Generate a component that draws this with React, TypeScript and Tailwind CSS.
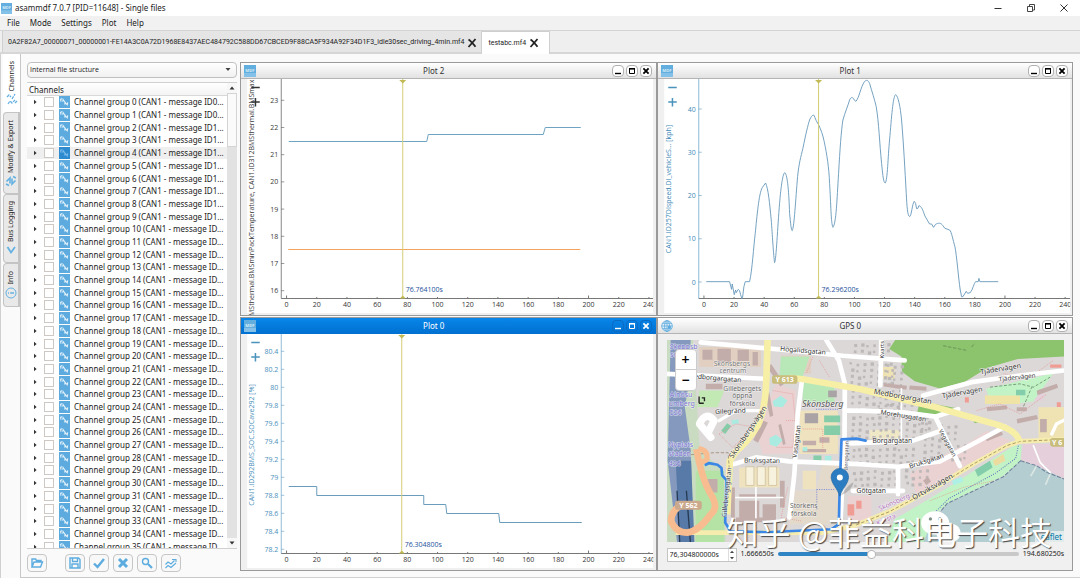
import React from "react";

type WindowProps = {
  title: string;
  active?: boolean;
  icon?: "mdf" | "globe";
  children: React.ReactNode;
};

const MdfIcon = ({ className }: { className: string }) => (
  <svg viewBox="0 0 12 12" className={className} aria-hidden="true">
    <rect width="12" height="12" fill="#62aede" />
    <rect y="8" width="12" height="4" fill="#84c1e8" />
    <text x="6" y="6.6" textAnchor="middle" fontSize="4.2" fontWeight="700" fontFamily="Open Sans" fill="#d5eaf7">
      MDF
    </text>
  </svg>
);

const GlobeIcon = ({ className }: { className: string }) => (
  <svg viewBox="0 0 12 12" className={className} fill="none" stroke="#5aa8dc" strokeWidth="0.8" aria-hidden="true">
    <circle cx="6" cy="6" r="5.3" fill="#e4f1fa" />
    <ellipse cx="6" cy="6" rx="2.4" ry="5.3" />
    <path d="M0.7 6h10.6M1.5 3.3h9M1.5 8.7h9M6 .7v10.6" />
    <circle cx="8.4" cy="7.2" r="1.2" fill="#5aa8dc" />
  </svg>
);

const CanIcon = ({ selected }: { selected: boolean }) => (
  <svg viewBox="0 0 11 12" className="h-3 w-[11px] shrink-0" aria-hidden="true">
    <rect width="11" height="12" fill={selected ? "#2f8bd0" : "#5dabde"} />
    <path
      d="M3.4 2.6 1.6 3.4 2 5.6M3.600 5.6l.6-1.800 1.600 2.200M5.800 8.6l.2-2.400 2.200 2.600.6-2.400"
      fill="none"
      stroke={selected ? "#7dbcea" : "#e3f1fa"}
      strokeWidth="1.1"
    />
  </svg>
);

function WindowButtons({ active }: { active: boolean }) {
  const box = active
    ? "flex size-3 items-center justify-center rounded-sm border border-[#0a6bc4] text-white"
    : "flex size-3 items-center justify-center rounded-sm border border-[#b0b0b0] bg-white text-black";
  return (
    <div className="flex gap-0.5">
      <button className={box} aria-label="Minimize">
        <svg viewBox="0 0 10 10" className="size-2.5 shrink-0">
          <path d="M2 7.5h6" stroke="currentColor" strokeWidth="1.4" />
        </svg>
      </button>
      <button className={box} aria-label="Maximize">
        <svg viewBox="0 0 10 10" className="size-2.5 shrink-0" fill="none" stroke="currentColor">
          <path d="M2.5 2.5v5h5v-5" />
          <path d="M2 2.8h6" strokeWidth="1.6" />
        </svg>
      </button>
      <button className={box} aria-label="Close">
        <svg viewBox="0 0 10 10" className="size-2.5 shrink-0">
          <path d="m2.4 2.4 5.2 5.2m0-5.2L2.4 7.6" stroke="currentColor" strokeWidth="1.8" />
        </svg>
      </button>
    </div>
  );
}

function SubWindow({ title, active = false, icon = "mdf", children }: WindowProps) {
  return (
    <section className="flex min-h-0 min-w-0 flex-col border border-[#9a9a9a] bg-[#f0f0f0]">
      <header
        className={
          active
            ? "flex h-4 shrink-0 items-center bg-gradient-to-b from-[#0a86ea] to-[#0070d0] pr-1 pl-[3px] text-white"
            : "flex h-4 shrink-0 items-center border-b border-[#b4b4b4] bg-gradient-to-b from-white to-[#e2e2e2] pr-1 pl-[3px] text-[#333]"
        }
      >
        {icon === "mdf" ? <MdfIcon className="size-3" /> : <GlobeIcon className="size-3" />}
        <h2 className="flex-1 text-center text-[8px] leading-4">{title}</h2>
        <WindowButtons active={active} />
      </header>
      <div className="flex min-h-0 flex-1 flex-col">{children}</div>
    </section>
  );
}

type Tick = { y: number; label: string };
type ChartProps = {
  label: string;
  labelY: number;
  color: string;
  axisX: number;
  x0: number;
  step: number;
  ticks: Tick[];
  cursorX: number;
  cursor: string;
  signColor: string;
  children: React.ReactNode;
};

function Chart({ label, labelY, color, axisX, x0, step, ticks, cursorX, cursor, signColor, children }: ChartProps) {
  const xs = Array.from({ length: 13 }, (_, i) => i * 20);
  return (
    <svg viewBox="0 0 414 236" className="min-h-0 w-full flex-1 overflow-hidden" fontFamily="'Open Sans', sans-serif" fontSize="7">
      <rect x="6" width="406" height="234" fill="#fff" />
      <text transform={`translate(13 ${labelY}) rotate(-90)`} textAnchor="middle" fill={color}>
        {label}
      </text>
      <path d="M10 8.500h8.500M10 23h8.500M14.200 19v8.500" stroke={signColor} strokeWidth="1.500" />
      <path d={`M${axisX} 0V219.500`} stroke={color} strokeOpacity="0.6" />
      <path d={`M${axisX} 219.500H412`} stroke="#777" />
      {ticks.map((t) => (
        <g key={t.label}>
          <path d={`M${axisX} ${t.y}h3`} stroke={color} strokeOpacity="0.5" />
          <text x={axisX - 3} y={t.y + 2.5} textAnchor="end" fill={color}>
            {t.label}
          </text>
        </g>
      ))}
      {xs.map((x, i) => (
        <g key={x}>
          <path d={`M${x0 + i * step} 219.500v${x % 200 === 0 ? -3 : -1.5}`} stroke="#777" />
          <text x={x0 + i * step} y="228" textAnchor="middle" fill="#333">
            {x}
          </text>
        </g>
      ))}
      <rect x="412" width="2" height="236" fill="#f0f0f0" />
      {children}
      <path d={`M${cursorX} 0V219`} stroke="#d3cc74" />
      <path d={`M${cursorX - 3.5} 1h7l-3.500 3.500zM${cursorX - 3} 219.500h6l-3-3z`} fill="#c2bb55" />
      <text x={cursorX + 3} y="213" fill="#24509a">
        {cursor}
      </text>
    </svg>
  );
}

const speedPath =
  "M150 665H220L226 688 228 672 234 704 238 690 240 698 246 688 250 692 253 704 257 716 259 712 263 680 267 665H280C288 630 292 560 297 520C302 470 308 400 318 383L328 369C336 385 340 430 345 480C348 520 352 590 355 608C360 600 364 500 370 430C374 380 380 338 386 338C394 345 398 400 400 460C403 490 405 512 408 512C414 500 418 420 424 350C428 310 434 290 440 265C448 225 455 195 460 180C464 170 468 166 472 165C475 168 477 176 480 182L488 196C494 210 500 225 504 245C512 285 518 320 520 370C524 430 524 490 530 502C540 490 542 420 547 340C551 270 555 210 560 180C566 158 576 135 580 120C586 108 590 112 594 120L599 124C608 115 614 80 624 66C630 58 636 60 640 70C648 98 654 115 660 140C668 190 670 250 676 310C680 350 682 368 687 369C694 360 695 290 700 240C706 170 710 110 718 104C726 108 732 140 736 180C742 250 746 330 750 400C752 440 754 468 760 470C766 468 768 430 774 424L778 430 781 446 785 445 788 437C795 438 800 450 806 468L820 492 826 492 832 502 838 493C846 488 854 488 860 497L866 505 880 510C886 515 890 540 896 560C902 590 906 650 912 690L916 710H920L930 694 934 700 942 698C950 688 953 670 958 665H966L968 655 971 665H1026";

const houseBlocks = [
  [580, 145, 130, 60], [690, 150, 55, 70], [585, 225, 150, 60], [585, 305, 230, 60], [660, 270, 120, 20],
  [585, 400, 190, 45], [590, 468, 125, 55], [745, 465, 70, 55], [850, 330, 60, 45], [800, 370, 60, 60],
  [590, 88, 120, 30], [790, 300, 40, 60], [880, 390, 50, 40],
];

const houses = houseBlocks.flatMap(([x, y, w, h], b) => {
  const out: { x: number; y: number; s: number }[] = [];
  for (let i = 0; i * 20 < w; i++)
    for (let j = 0; j * 19 < h; j++)
      out.push({ x: x + i * 20 + ((i * 7 + j * 5 + b) % 6), y: y + j * 19 + ((i * 5 + b) % 7), s: 7 + ((i + j * 3 + b) % 4) });
  return out;
});

type MapLabel = { x: number; y: number; t: string; r?: number; s?: number; c?: string; i?: boolean };
const mapLabels: MapLabel[] = [
  { x: 440, y: 117, t: "Högalidsgatan", r: 5 },
  { x: 228, y: 158, t: "Skönsbergs", c: "#777" },
  { x: 231, y: 178, t: "centrum", c: "#777" },
  { x: 176, y: 199, t: "Medborgargatan", r: 5 },
  { x: 259, y: 232, t: "Gillebergets", c: "#666" },
  { x: 259, y: 253, t: "öppna", c: "#666" },
  { x: 259, y: 275, t: "förskola", c: "#666" },
  { x: 224, y: 298, t: "Gilegränd", r: -3 },
  { x: 282, y: 358, t: "Skönsbergsvägen", r: -56, s: 22 },
  { x: 318, y: 446, t: "Bruksgatan", r: 1 },
  { x: 428, y: 383, t: "Vasagatan", r: -83 },
  { x: 500, y: 278, t: "Skönsberg", s: 27, i: true, c: "#555" },
  { x: 219, y: 535, t: "Gillebergsgatan", r: -84, c: "#445" },
  { x: 443, y: 582, t: "Storkens", c: "#666" },
  { x: 443, y: 604, t: "förskola", c: "#666" },
  { x: 645, y: 538, t: "Götgatan" },
  { x: 738, y: 255, t: "Medborgargatan", r: 10, s: 22 },
  { x: 740, y: 312, t: "Morehusgatan", r: 9 },
  { x: 708, y: 387, t: "Borgargatan" },
  { x: 812, y: 447, t: "Bruksgatan", r: -18 },
  { x: 868, y: 390, t: "Vegagatan", r: 61, s: 18 },
  { x: 682, y: 108, t: "Kvarts", r: -90, s: 18 },
  { x: 1033, y: 172, t: "Tjädervägen", r: -9, s: 21 },
  { x: 1082, y: 197, t: "Tjädervägen", r: -6, s: 19 },
  { x: 918, y: 243, t: "Tjädervägen", r: -10, s: 21 },
  { x: 832, y: 524, t: "Örtviksvägen", r: -30, s: 22 },
  { x: 716, y: 570, t: "Skönsberg", r: -24, c: "#b070b8" },
  { x: 692, y: 622, t: "Korsta", r: -24, c: "#b070b8" },
  { x: 576, y: 425, t: "Bergsgatan", r: -88, s: 16, c: "#556" },
  { x: 84, y: 105, t: "Skeppsb", c: "#7771cf", s: 21 },
  { x: 78, y: 130, t: "sundet", c: "#7771cf", s: 21 },
  { x: 76, y: 250, t: "Alnösu", c: "#7771cf", s: 21 },
  { x: 78, y: 276, t: "umberg", c: "#7771cf", s: 21 },
  { x: 60, y: 302, t: "526", c: "#7771cf", s: 21 },
  { x: 75, y: 400, t: "Nyplats", c: "#7771cf", s: 21 },
  { x: 72, y: 425, t: "staden", c: "#7771cf", s: 21 },
  { x: 57, y: 455, t: "426", c: "#7771cf", s: 21 },
];

function MapDrawing() {
  return (
    <svg viewBox="34 78 1189 606" preserveAspectRatio="xMidYMid slice" className="size-full" fontFamily="'Noto Sans', sans-serif">
      <rect x="34" y="78" width="1189" height="606" fill="#dcd8d8" />
      {/* western shore */}
      <path d="M34 78h78l20 330 70 60 8 216H34z" fill="#c9dcc2" />
      <path d="M45 78h60l-10 160-8 40 18 130 8 276H64L36 440z" fill="#8499bd" />
      <path d="M60 440h46l10 244H72z" fill="#587aa8" />
      <path d="M64 530 72 684M92 530l12 154" stroke="#263b53" strokeWidth="4" />
      <path d="M120 470h85v214h-85z" fill="#b5e3a6" />
      <path d="M130 230h75l-20 50h-60z" fill="#c2e8b4" />
      {/* districts */}
      <path d="M130 100h185v60H130zM375 125h90v55h-90z" fill="#e1d0c1" />
      <path d="M375 128h85l-20 60h-70zM440 205h95v60h-95z" fill="#b9e8b8" />
      <path d="M250 460h120v60H250zM430 290h115v130H430zM440 470h40v55h-40z" fill="#efe3bf" />
      <path d="M500 440h55v190H400l10-100h70z" fill="#e3dacb" />
      <path d="M575 545h70v75h-70zM760 480l110-60 60-30 60-40 70 30-200 130-80 30zM300 350l60-140 60 20-10 190h-90z" fill="#ead2d3" />
      <path d="M1100 390h123v105l-60-20-70-40zM1100 200h60v60h-60z" fill="#e4cfda" />
      <path d="M1145 280h78v100h-78zM680 160h35v35h-35z" fill="#efe3b4" />
      <path d="M640 348h90v26h-90z" fill="#efe8c6" />
      {/* woods and parks */}
      <path d="M717 78H1223v50l-140 8-90 26-68 42-75 20-75-22-38-28-2-46-36-22z" fill="#8bc46c" />
      <path d="M790 262 905 284l-8 10-58 18-58-10zM940 306l45 14-30 8z" fill="#8bc46c" />
      <path d="M860 96l70 14M945 100l10-12" stroke="#5d7c50" strokeWidth="2" strokeDasharray="10 5" />
      <path d="M988 225 1190 178 1130 262 1075 270 1000 262z" fill="#c2f3c6" />
      <path d="M985 245h105v25h-105z" fill="#efe3a6" />
      <path d="M715 615 850 535 1070 396 1094 392l-2 48-52 46-170 82-46 50-20 66H690z" fill="#c2f3c6" />
      <path d="M955 468 1000 440l8 20-44 28zM1078 228h28v16h-28z" fill="#84cdaa" />
      <path d="M1008 440 1040 420l6 20-30 16z" fill="#ecdca0" />
      <path d="M886 500l30-12 4 14-28 12z" fill="#aeefe6" />
      <path d="M1092 440 1140 455 1223 495V684H800l30-66 42-50 168-80z" fill="#b3cdd0" />
      <path d="M1092 440l48 15 30 20 53 20M1092 440l-52 48-168 80-42 50" fill="none" stroke="#6d7f9a" strokeWidth="3" strokeDasharray="12 5" />
      <path d="M1138 458l-16 28M1180 480l-14 32" stroke="#dbe6e3" strokeWidth="5" />
      <path d="M1085 395l-8 38-60 44-140 76-60 60" fill="none" stroke="#5f6fc0" strokeWidth="3" strokeDasharray="3 4" />
      <path d="M1000 220l90-10 40 10 50-30M1095 290l30-70" fill="none" stroke="#6b8b6b" strokeWidth="2.500" strokeDasharray="9 5" />
      {/* buildings */}
      {houses.map((h, i) => (
        <rect key={i} x={h.x} y={h.y} width={h.s} height={h.s} fill="#bdb8b8" />
      ))}
      <g fill="#c3adaa">
        <path d="M140 108h30v30h-30zM185 105h40v40h-40zM245 108h34v34h-34zM290 115h16v40h-16zM150 210h50v16h-50zM345 150l40 60-12 8-36-52zM250 540h110v10H250zM250 560h60v50h-60zM320 570h40v40h-40zM240 610h120v14H240z" />
        <path d="M320 320l16 6-30 60-14-8zM340 235l12 70-10 4-14-60zM375 330l14 60-8 3-14-60zM440 380h40v14h-40zM490 370h30v16h-30zM440 405h70v10h-70zM372 500h14v80h-14zM155 495h30v40h-30zM225 520h12v90h-12z" />
        <path d="M682 208l70 8-2 12-68-10zM760 215l50 4v12l-52-4zM990 280l60-6 2 12-60 6zM1080 315l60-12 4 12-62 14zM1080 280h30v12h-30zM1140 230l60-20 4 12-62 22zM800 500l14-12 10 14-14 10zM985 372l50-20 4 10-48 20zM1150 315h20v40h-20z" />
      </g>
      <path d="M270 458h24v56h-24zM304 458h24v56h-24zM338 458h24v56h-24z" fill="#f7f2dd" stroke="#c9b993" strokeWidth="2" />
      <path d="M446 298h40v30h-40zM516 230h26v20h-26z" fill="#aaa3a5" />
      <path d="M504 305h48v20h-48zM504 335h48v28h-48zM472 424h24v20h-24zM196 350l18-22 12 8-18 24z" fill="#85cca9" />
      <path d="M350 262l24-16 20 14-14 20-26-2zM340 372l20-10 20 16-18 20-20-6zM440 400h14v12h-14zM226 320l20-4 4 12-20 4zM506 426h20v14h-20z" fill="#a9ebe1" />
      <path d="M574 570h20v34h-20zM600 560h16v24h-16zM925 250h12v16h-12zM1180 152h34v10h-34zM1200 265h12v14h-12z" fill="#ef9d94" />
      {/* footpaths */}
      <g fill="none" stroke="#e58e8a" strokeWidth="2" strokeDasharray="3 3">
        <path d="M190 360l50-30 60 10-70 60zM350 230l60 10 10 100M390 320h30l-10 80h-50M490 140l30 50M470 130l-20 50M960 290l70-20 60 30 80-60M1040 180l80 10 70-50M820 560l100-40 90-20M440 345h60v70M395 520l-20 90 60 10" />
      </g>
      <path d="M430 446h90M482 526h55M482 526v60M480 286h70" stroke="#7a86d8" strokeWidth="3" strokeDasharray="3 4" fill="none" />
      {/* local streets */}
      <g fill="none" stroke="#fff" strokeLinecap="round" strokeLinejoin="round">
        <path
          strokeWidth="14"
          d="M135 86 380 108 560 126 745 140M510 78 548 140 566 210 565 380 552 640M34 180 330 195M437 205 425 300 415 480 400 610M235 450 300 430 400 442 610 450 725 458 850 442 960 384 1045 338M612 290 740 295 838 308 905 286M838 312 910 456M585 388 770 380 850 352M675 78 672 215M800 245 945 205 1090 185 1223 170M590 530H740M725 458V540M566 290h60"
        />
        <path strokeWidth="22" d="M165 370l-34-40q20-40 44-10l-16 32" />
        <path strokeWidth="10" d="M190 320l50-30h80M1185 360l14-30 24-12" />
        <path strokeWidth="5" d="M240 550h140M300 520v90M735 225v150M1130 395l20 50 30 30" />
      </g>
      {/* main roads */}
      <g fill="none" strokeLinejoin="round">
        <path d="M60 655 H500 L600 632 700 592 850 512 950 450 1050 395 1090 382 1223 376" stroke="#f6ecae" strokeWidth="14" />
        <path d="M600 632 700 592 850 512 950 450 1050 395 1090 382 1223 376" stroke="#9d8b52" strokeWidth="2.500" strokeDasharray="10 6" />
        <path d="M335 78 331 200Q328 290 305 335 275 385 240 412L222 440 214 600" stroke="#f7efa6" strokeWidth="20" />
        <path d="M400 192 440 196 612 226 830 278 1000 326Q1080 345 1088 382" stroke="#f7efa6" strokeWidth="19" />
        <path d="M105 422l70-6h42l4 60" stroke="#9e8c76" strokeWidth="2.500" strokeDasharray="10 5" />
        <path d="M122 405Q140 500 165 540 190 580 165 600 130 650 95 655 60 655 46 620 48 585 80 572" stroke="#f7bd90" strokeWidth="20" />
        <path d="M128 404q28 4 26 30-8 14-26 6" stroke="#f7bd90" strokeWidth="16" />
      </g>
      <g fontSize="21" fontWeight="700" textAnchor="middle" fill="#fff">
        <rect x="348" y="184" width="76" height="26" rx="8" fill="#c9bd7c" />
        <text x="386" y="205">Y 613</text>
        <rect x="58" y="560" width="80" height="27" rx="8" fill="#cba98c" />
        <text x="98" y="581">Y 562</text>
        <rect x="1180" y="372" width="60" height="26" rx="8" fill="#c9bd7c" />
        <text x="1201" y="393">Y 6</text>
      </g>
      {/* driven route */}
      <path
        d="M150 452 160 447 185 452 197 462 199 484 212 498 208 625 224 651 330 654 525 645 548 630 550 545 556 376 600 374 628 380"
        fill="none"
        stroke="#3b87e6"
        strokeWidth="8"
        strokeLinecap="round"
        strokeLinejoin="round"
      />
      {mapLabels.map((l) => (
        <text
          key={`${l.t}-${l.x}`}
          transform={`translate(${l.x} ${l.y}) rotate(${l.r ?? 0})`}
          textAnchor="middle"
          fontSize={l.s ?? 20}
          fontStyle={l.i ? "italic" : "normal"}
          fill={l.c ?? "#333"}
          stroke="#fff"
          strokeOpacity="0.7"
          strokeWidth="3"
          paintOrder="stroke"
        >
          {l.t}
        </text>
      ))}
      <path d="M130 248v20M130 268h14M138 252h8v10" stroke="#222" strokeWidth="4" fill="none" />
      <path d="M552 545q30-40 40-40-4 24-40 40" fill="#555" opacity="0.3" />
      <path d="M551 546C545 525 525 508 525 489a26 26 0 0 1 52 0C577 508 557 525 551 546z" fill="#2b7cc0" stroke="#1f66a3" strokeWidth="2" />
      <circle cx="551" cy="490" r="9" fill="#fff" />
      <g fill="#fff">
        <ellipse cx="836" cy="626" rx="42" ry="35" />
        <ellipse cx="876" cy="656" rx="36" ry="30" />
      </g>
      <g fill="#7f8f86">
        <circle cx="822" cy="614" r="5" />
        <circle cx="850" cy="614" r="5" />
      </g>
    </svg>
  );
}

function SideTab({ label, active = false, className, icon }: { label: string; active?: boolean; className: string; icon: React.ReactNode }) {
  return (
    <button
      role="tab"
      aria-selected={active}
      className={`flex w-[17px] flex-col items-center justify-center gap-0.5 text-[7px] leading-[10px] text-[#222] ${className} ${
        active ? "bg-white" : "rounded-l-sm border border-r-2 border-[#c4c4c4] bg-[#e9e9e9]"
      }`}
    >
      <span className="rotate-180 whitespace-nowrap [writing-mode:vertical-rl]">{label}</span>
      {icon}
    </button>
  );
}

function ToolButton({ label, children }: { label: string; children: React.ReactNode }) {
  return (
    <button aria-label={label} className="flex h-[18px] w-5 items-center justify-center rounded-sm border border-[#c6c6c6] bg-[#f8f8f8]">
      <svg viewBox="0 0 14 14" className="size-3.5" fill="none" stroke="#5cacdf" strokeWidth="1.400">
        {children}
      </svg>
    </button>
  );
}

const FileTabClose = () => (
  <svg viewBox="0 0 10 10" className="size-2.5">
    <path d="M1.500 1.500Q4 3 8.500 8.800M8.500 1Q6 4 1.500 9" fill="none" stroke="#222" strokeWidth="1.800" />
  </svg>
);

const groups = Array.from({ length: 36 }, (_, i) => ({
  id: i,
  name: `Channel group ${i} (CAN1 - message ${i < 2 ? "ID0" : i < 10 ? "ID1" : "ID"}...`,
}));

export default function App() {
  return (
    <div className="flex h-screen min-h-[578px] flex-col overflow-hidden bg-[#fafafa] font-['Noto_Sans',sans-serif] text-[8px] text-[#222]">
      <header className="flex h-4 shrink-0 items-center bg-white pl-px">
        <MdfIcon className="size-[11px]" />
        <h1 className="flex-1 pl-[3px] leading-4">asammdf 7.0.7 [PID=11648] - Single files</h1>
        <div className="flex gap-[23px] pr-[11px]">
          <button aria-label="Minimize">
            <svg viewBox="0 0 10 10" className="size-2.5" stroke="#333">
              <path d="M1.500 5.500h7" />
            </svg>
          </button>
          <button aria-label="Restore">
            <svg viewBox="0 0 10 10" className="size-2.5" fill="none" stroke="#444">
              <path d="M1.500 3.500h5v5h-5zM3.500 3V1.500h5v5.500H7" />
            </svg>
          </button>
          <button aria-label="Close">
            <svg viewBox="0 0 10 10" className="size-2.5" stroke="#333">
              <path d="m1.500 1.500 7 7m0-7-7 7" />
            </svg>
          </button>
        </div>
      </header>

      <nav className="flex h-[15px] shrink-0 items-center gap-2.5 border-b border-[#d4d4d4] bg-[#f1f1f1] pl-[7px]">
        <button>File</button>
        <button>Mode</button>
        <button>Settings</button>
        <button>Plot</button>
        <button>Help</button>
      </nav>

      <div
        role="tablist"
        className="flex h-[23px] shrink-0 border-b-2 border-[#d6d6d6] bg-[#efefef] pl-0.5 font-['Roboto',sans-serif] text-[7px] whitespace-nowrap"
      >
        <div className="flex min-w-0 items-center gap-[3px] border-l border-[#cfcfcf] bg-[#e5e5e5] pr-1 pl-[5px] pt-0.5">
          <button role="tab" aria-selected="false">
            0A2F82A7_00000071_00000001-FE14A3C0A72D1968E8437AEC484792C588DD67CBCED9F88CA5F934A92F34D1F3_idle30sec_driving_4min.mf4
          </button>
          <button aria-label="Close file">
            <FileTabClose />
          </button>
        </div>
        <div className="-mb-0.5 flex items-center gap-[3px] border border-b-0 border-[#cfcfcf] bg-white pr-2.5 pl-1.5">
          <button role="tab" aria-selected="true">
            testabc.mf4
          </button>
          <button aria-label="Close file">
            <FileTabClose />
          </button>
        </div>
      </div>

      <main className="flex min-h-0 flex-1 border-l border-[#d0d0d0] pl-0.5">
        <div role="tablist" aria-orientation="vertical" className="flex flex-col">
          <SideTab
            label="Channels"
            active
            className="h-[58px]"
            icon={
              <svg viewBox="0 0 12 12" className="size-3" fill="none" stroke="#63b1e2" strokeWidth="1.300">
                <path d="M1 4l2-2 2 2M6 6l3-5M2 11l2-3 2 2 3-3M9 10l2-2" strokeDasharray="3 1" />
              </svg>
            }
          />
          <SideTab
            label="Modify & Export"
            className="h-[82px]"
            icon={
              <svg viewBox="0 0 12 12" className="size-3" fill="none" stroke="#63b1e2" strokeWidth="1.600">
                <path d="M5 8.500V3L1.500 6.500M7 3.500V9l3.500-3.500M1 9l3 1.500M8 1.500 11 3" />
              </svg>
            }
          />
          <SideTab
            label="Bus Logging"
            className="h-[69px]"
            icon={
              <svg viewBox="0 0 12 12" className="size-3" fill="none" stroke="#63b1e2" strokeWidth="1.800">
                <path d="m2.500 3 3.500 5.500L10 3" />
              </svg>
            }
          />
          <SideTab
            label="Info"
            className="h-11"
            icon={
              <svg viewBox="0 0 12 12" className="size-3" fill="none" stroke="#63b1e2">
                <circle cx="6" cy="6" r="5" />
                <path d="M3 6h1M5.200 6H9" strokeWidth="1.300" />
              </svg>
            }
          />
        </div>

        <aside className="flex w-[220px] shrink-0 flex-col border-b border-l border-[#c8c8c8] pt-2 pr-[3px] pl-1.5">
          <div className="relative">
            <select
              aria-label="Channel display mode"
              className="h-4 w-full appearance-none rounded-sm border border-[#c0c0c0] bg-gradient-to-b from-white to-[#f1f1f1] pl-0.5 font-['Open_Sans',sans-serif] text-[7px]"
            >
              <option>Internal file structure</option>
            </select>
            <svg viewBox="0 0 6 4" className="pointer-events-none absolute top-1.5 right-1.5 h-1 w-1.5" fill="#444">
              <path d="M.5 0h5L3 3z" />
            </svg>
          </div>

          <div className="mt-1 flex min-h-0 flex-1 border-y border-[#d0d0d0] bg-white">
            <div className="flex min-w-0 flex-1 flex-col">
              <div className="h-[13px] shrink-0 border-b border-[#d8d8d8] bg-gradient-to-b from-white to-[#f4f4f4] pl-0.5 leading-[13px]">Channels</div>
              <div className="min-h-0 flex-1 overflow-hidden">
                <ul className="grid h-[457px] grid-rows-[repeat(36,minmax(0,1fr))]">
                  {groups.map((g) => (
                    <li key={g.id} className={g.id === 4 ? "flex min-h-0 items-center bg-[#efefef] pl-1.5" : "flex min-h-0 items-center pl-1.5"}>
                      <button aria-label={`Expand group ${g.id}`} className="flex w-[11px] shrink-0">
                        <svg viewBox="0 0 5 6" className="h-1.5 w-[5px]" fill="#333">
                          <path d="M1 .8 3.600 3 1 5.200z" />
                        </svg>
                      </button>
                      <label className="flex min-w-0 items-center leading-3 whitespace-nowrap">
                        <input type="checkbox" className="mr-[5px] size-2.5 shrink-0 appearance-none border border-[#cdc8c4] bg-white" />
                        <CanIcon selected={g.id === 4} />
                        <span className="pl-1">{g.name}</span>
                      </label>
                    </li>
                  ))}
                </ul>
              </div>
            </div>
            <div className="flex w-2.5 flex-col bg-[#e2e2e2]">
              <button aria-label="Scroll up" className="flex h-2.5 items-center justify-center bg-[#f7f7f7]">
                <svg viewBox="0 0 6 4" className="h-1 w-1.5" fill="#333">
                  <path d="M.5 3.500h5L3 .5z" />
                </svg>
              </button>
              <div className="h-[54px] border border-[#d4d4d4] bg-[#fafafa]" />
              <div className="flex-1" />
              <button aria-label="Scroll down" className="flex h-2.5 items-center justify-center bg-[#f7f7f7]">
                <svg viewBox="0 0 6 4" className="h-1 w-1.5" fill="#333">
                  <path d="M.5.5h5L3 3.500z" />
                </svg>
              </button>
            </div>
          </div>

          <div className="flex h-7 shrink-0 items-center gap-1">
            <ToolButton label="Open">
              <path d="M2 11V3h3.500l1 1.500H11V6M2 11l2-5h8.500l-2 5z" />
            </ToolButton>
            <div className="w-2.5" />
            <ToolButton label="Save">
              <path d="M2 2h8.500L12 3.500V12H2zM4.500 2v3.500h5V2M4 12V8h6v4" />
            </ToolButton>
            <ToolButton label="Apply">
              <path d="m2 7.500 3.500 3.500L12 3" strokeWidth="2.400" />
            </ToolButton>
            <ToolButton label="Clear">
              <path d="m3 3 8 8m0-8-8 8" strokeWidth="3" />
            </ToolButton>
            <ToolButton label="Search">
              <circle cx="5.500" cy="5.500" r="3" />
              <path d="m8 8 4 4" strokeWidth="2.200" />
            </ToolButton>
            <ToolButton label="Plot selected">
              <path d="M1.500 8.500 4 6l3 2 3.500-3.500M1.500 12 4 9.500l3 2L12 7M8 3.500h4M12 3v3" strokeWidth="1.100" />
            </ToolButton>
          </div>
        </aside>

        <div className="flex min-w-0 flex-1 flex-col border-b border-[#d0d0d0] pt-2 pr-[7px] pb-1.5">
          <div className="grid min-h-0 flex-1 grid-cols-2 grid-rows-2 gap-y-px">
            <SubWindow title="Plot 2">
              <Chart
                label="3BMSthermal.BMSminPackTemperature, CAN1.ID312BMSthermal.BMSmaxPa"
                labelY={119}
                color="#3a3a3a"
                signColor="#333"
                axisX={40}
                x0={45.3}
                step={30.2}
                cursorX={161.5}
                cursor="76.764100s"
                ticks={[23, 22, 21, 20, 19, 18, 17, 16].map((v, i) => ({ y: 21.3 + i * 27.2, label: String(v) }))}
              >
                <path d="M47.500 62.500H185.500L187 55.500H302L304 48.500H339.500" fill="none" stroke="#6fa3c2" />
                <rect x="47" y="170" width="292" height="1" fill="#f5a45e" />
              </Chart>
            </SubWindow>
            <SubWindow title="Plot 1">
              <Chart
                label="CAN1.ID257DIspeed.DI_vehicleS... [kph]"
                labelY={110}
                color="#3f8ab8"
                signColor="#4a93bd"
                axisX={40.5}
                x0={45.7}
                step={30.1}
                cursorX={160.3}
                cursor="76.296200s"
                ticks={[40, 30, 20, 10, 0].map((v, i) => ({ y: 30 + i * 43.25, label: String(v) }))}
              >
                <g transform="translate(-2 -19) scale(.33333)">
                  <path d={speedPath} fill="none" stroke="#6a9bbc" strokeWidth="2.800" strokeLinejoin="round" />
                </g>
              </Chart>
            </SubWindow>
            <SubWindow title="Plot 0" active>
              <Chart
                label="CAN1.ID292BMS_SOC.SOCave292 [%]"
                labelY={111}
                color="#4b90bb"
                signColor="#4a93bd"
                axisX={40}
                x0={45.3}
                step={30.2}
                cursorX={160.5}
                cursor="76.304800s"
                ticks={["80.4", "80.2", "80", "79.8", "79.6", "79.4", "79.2", "79", "78.8", "78.6", "78.4", "78.2"].map((label, i) => ({
                  y: 17.3 + i * 18,
                  label,
                }))}
              >
                <path d="M47.500 152.500H75.500V161.500H182.500V170.500H204.500L205.500 179.500H257.500L258.500 188.500H340.500" fill="none" stroke="#6a9dbb" />
              </Chart>
            </SubWindow>
            <SubWindow title="GPS 0" icon="globe">
              <div className="flex min-h-0 flex-1 flex-col pt-1.5 pr-2 pl-[9px]">
                <div className="relative min-h-0 flex-1">
                  <MapDrawing />
                  <div className="absolute top-[9px] left-2 flex w-[22px] flex-col rounded-sm border border-[#ccc] bg-white text-[14px] font-semibold text-black">
                    <button aria-label="Zoom in" className="h-5 border-b border-[#ccc] leading-5">
                      +
                    </button>
                    <button aria-label="Zoom out" className="h-5 leading-5">
                      −
                    </button>
                  </div>
                  <a href="#leaflet" className="absolute right-0 bottom-0 bg-white/60 px-0.5 text-[8px] leading-[11px] text-[#0078a8]">
                    Leaflet
                  </a>
                  <div className="absolute right-3 -bottom-[5px] font-['Noto_Sans_CJK_SC',sans-serif] text-[32px] leading-8 whitespace-nowrap text-white [text-shadow:1px_1px_1px_#444]">
                    知乎 @菲益科电子科技
                  </div>
                </div>
                <div className="flex h-7 shrink-0 items-start gap-1 pt-1.5 text-[7px] leading-3">
                  <div className="flex h-3.5 w-[70px] border border-[#c4c4c4] bg-white">
                    <input aria-label="Time stamp" defaultValue="76,304800000s" className="w-full min-w-0 flex-1 pl-0.5" />
                    <div className="flex w-2 flex-col border-l border-[#ddd]">
                      <button aria-label="Increase" className="flex flex-1 items-center justify-center">
                        <svg viewBox="0 0 6 4" className="h-1 w-1.5" fill="#444">
                          <path d="M1 3h4L3 .8z" />
                        </svg>
                      </button>
                      <button aria-label="Decrease" className="flex flex-1 items-center justify-center">
                        <svg viewBox="0 0 6 4" className="h-1 w-1.5" fill="#444">
                          <path d="M1 1h4L3 3.200z" />
                        </svg>
                      </button>
                    </div>
                  </div>
                  <span>1.666650s</span>
                  <input
                    type="range"
                    aria-label="Time position"
                    min={1.66665}
                    max={194.68025}
                    step={0.00005}
                    defaultValue={76.3048}
                    className="mt-1 h-1 min-w-0 flex-1 appearance-none rounded-full bg-[linear-gradient(to_right,#2f84c4_39%,#c9c9c9_39%)] [&::-webkit-slider-thumb]:size-[9px] [&::-webkit-slider-thumb]:appearance-none [&::-webkit-slider-thumb]:rounded-sm [&::-webkit-slider-thumb]:border [&::-webkit-slider-thumb]:border-[#b5b5b5] [&::-webkit-slider-thumb]:bg-white"
                  />
                  <span>194.680250s</span>
                </div>
              </div>
            </SubWindow>
          </div>
        </div>
      </main>
    </div>
  );
}
